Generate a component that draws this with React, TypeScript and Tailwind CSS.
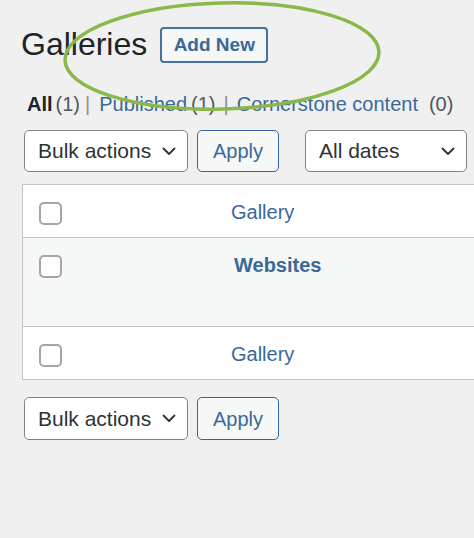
import React from 'react';

const Chevron: React.FC = () => (
  <svg width="14" height="9" viewBox="0 0 14 9" fill="none">
    <path d="M1.5 1.5 L7 7 L12.5 1.5" stroke="#2c3338" strokeWidth="1.8" strokeLinecap="round" strokeLinejoin="round" />
  </svg>
);

const Select: React.FC<{ label: string; width: string; height: string }> = ({ label, width, height }) => (
  <div
    className={`${width} ${height} flex items-center justify-between pl-[13px] pr-[11px] bg-white border border-[#7f8287] rounded-[5px] text-[21px] text-[#2c3338]`}
  >
    <span>{label}</span>
    <Chevron />
  </div>
);

const ApplyButton: React.FC<{ height: string }> = ({ height }) => (
  <button
    className={`${height} w-[82px] flex items-center justify-center bg-[#f6f7f7] border border-[#34649a] rounded-[5px] text-[20px] text-[#3a6999]`}
  >
    Apply
  </button>
);

const Checkbox: React.FC = () => (
  <div className="w-[23px] h-[23px] mt-[2px] ml-[16px] shrink-0 rounded-[5px] border-2 border-[#a3a5a9] bg-white" />
);

const rows = [
  { title: 'Gallery', bold: false, height: 'h-[52px]', bg: 'bg-white', border: '' },
  { title: 'Websites', bold: true, height: 'h-[89px]', bg: 'bg-[#f6f7f7]', border: 'border-t border-[#c3c4c7]' },
  { title: 'Gallery', bold: false, height: 'h-[53px]', bg: 'bg-white', border: 'border-t border-[#c3c4c7]' },
];

export default function App() {
  return (
    <div
      className="relative w-[474px] h-[538px] overflow-hidden bg-[#f0f0f1]"
      style={{ fontFamily: '"Liberation Sans", Arial, sans-serif' }}
    >
      <div className="flex items-center pt-[27px] pl-[21px]">
        <h1 className="text-[32px] leading-[36px] text-[#1d2327] -mt-[2px]">Galleries</h1>
        <button className="ml-[13px] w-[108px] h-[36px] flex items-center justify-center bg-[#f6f7f7] border-2 border-[#4471a0] rounded-[4px] text-[19px] font-bold text-[#3a6999]">
          Add New
        </button>
      </div>

      <div className="flex items-baseline mt-[29px] pl-[27px] text-[20px] leading-[24px]">
        <span className="font-bold text-[#1d2327]">All</span>
        <span className="ml-[3px] text-[#50575e]">(1)</span>
        <span className="ml-[5px] text-[#8c8f94]">|</span>
        <span className="ml-[9px] text-[#3a6999]">Published</span>
        <span className="ml-[4px] text-[#50575e]">(1)</span>
        <span className="ml-[8px] text-[#8c8f94]">|</span>
        <span className="ml-[8px] text-[#3a6999]">Cornerstone content</span>
        <span className="ml-[11px] text-[#50575e]">(0)</span>
      </div>

      <div className="flex items-center mt-[14px] pl-[24px]">
        <Select label="Bulk actions" width="w-[164px]" height="h-[42px]" />
        <div className="ml-[9px]">
          <ApplyButton height="h-[42px]" />
        </div>
        <div className="ml-[26px]">
          <Select label="All dates" width="w-[162px]" height="h-[42px]" />
        </div>
      </div>

      <div className="mt-[12px] ml-[22px] w-[480px] border border-[#c3c4c7] bg-white">
        {rows.map((row, i) => (
          <div key={i} className={`flex items-start pt-[15px] ${row.height} ${row.bg} ${row.border}`}>
            <Checkbox />
            <span
              className={`text-[20px] leading-[24px] text-[#3a6999] ${
                row.bold ? 'font-bold ml-[172px]' : 'ml-[169px]'
              }`}
            >
              {row.title}
            </span>
          </div>
        ))}
      </div>

      <div className="flex items-center mt-[17px] pl-[24px]">
        <Select label="Bulk actions" width="w-[164px]" height="h-[43px]" />
        <div className="ml-[9px]">
          <ApplyButton height="h-[43px]" />
        </div>
      </div>

      <svg className="absolute inset-0 pointer-events-none" width="474" height="538">
        <ellipse
          cx="222"
          cy="56"
          rx="157"
          ry="53"
          transform="rotate(-1.5 222 56)"
          fill="none"
          stroke="#8ab84b"
          strokeWidth="3.5"
        />
      </svg>
    </div>
  );
}
